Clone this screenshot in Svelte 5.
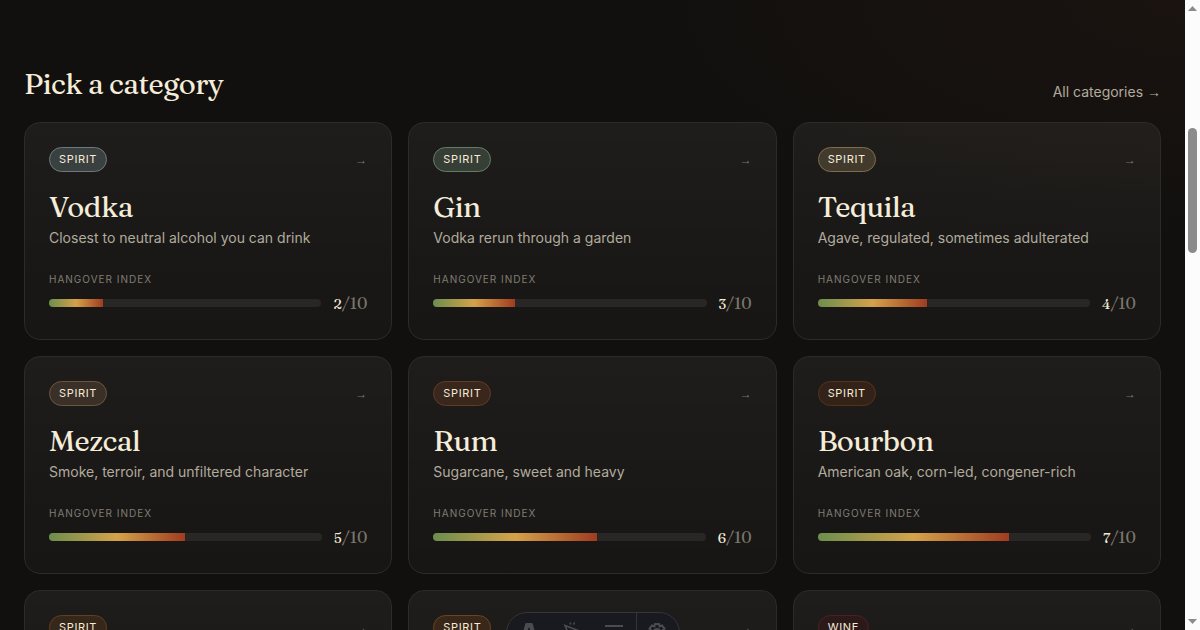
<script lang="ts">
  type Category = {
    name: string;
    kind: string;
    line: string;
    score: number;
    tint: string;
  };

  const categories: Category[] = [
    { name: "Vodka", kind: "Spirit", line: "Closest to neutral alcohol you can drink", score: 2, tint: "vodka" },
    { name: "Gin", kind: "Spirit", line: "Vodka rerun through a garden", score: 3, tint: "gin" },
    { name: "Tequila", kind: "Spirit", line: "Agave, regulated, sometimes adulterated", score: 4, tint: "tequila" },
    { name: "Mezcal", kind: "Spirit", line: "Smoke, terroir, and unfiltered character", score: 5, tint: "mezcal" },
    { name: "Rum", kind: "Spirit", line: "Sugarcane, sweet and heavy", score: 6, tint: "rum" },
    { name: "Bourbon", kind: "Spirit", line: "American oak, corn-led, congener-rich", score: 7, tint: "bourbon" },
    { name: "Whisky", kind: "Spirit", line: "Malt, cask and patience", score: 7, tint: "whisky" },
    { name: "Brandy", kind: "Spirit", line: "Grapes, distilled and rested", score: 8, tint: "brandy" },
    { name: "Red wine", kind: "Wine", line: "Tannin, skins and histamine", score: 8, tint: "wine" },
  ];
</script>

<div class="window">
  <main>
    <header>
      <h2>Pick a category</h2>
      <a class="all" href="#categories">All categories <span class="glyph">→</span></a>
    </header>

    <div class="grid" id="categories">
      {#each categories as c}
        <a class="card" href="#{c.tint}">
          <div class="top">
            <span class="badge {c.tint}">{c.kind}</span>
            <span class="arrow glyph">→</span>
          </div>
          <h3>{c.name}</h3>
          <p class="line">{c.line}</p>
          <p class="label">Hangover index</p>
          <div class="index">
            <div class="track">
              <div class="fill" style="width: {c.score * 10}%"></div>
            </div>
            <span class="score"><b>{c.score}</b>/10</span>
          </div>
        </a>
      {/each}
    </div>
  </main>

  <!-- page scrollbar -->
  <div class="scrollbar" aria-hidden="true">
    <svg width="9" height="5" viewBox="0 0 9 5"><path d="M0 5 4.5 0 9 5Z" /></svg>
    <div class="rail"><div class="thumb"></div></div>
    <svg width="9" height="5" viewBox="0 0 9 5"><path d="M0 0h9L4.5 5Z" /></svg>
  </div>

  <!-- dev toolbar, peeking over the bottom edge -->
  <div class="toolbar">
    <button aria-label="Menu">
      <svg width="20" height="20" viewBox="0 0 20 20">
        <path fill="currentColor" d="M7.500 1h5q1 0 1.300 1L17.500 16q-2-1-4.500-1.400L10.600 6q-.6-1.200-1.200 0L7 14.600Q4.500 15 2.500 16L6.200 2Q6.500 1 7.500 1Z" />
      </svg>
    </button>
    <button aria-label="Inspect">
      <svg width="20" height="20" viewBox="0 0 20 20" fill="none" stroke="currentColor" stroke-width="1.600">
        <path d="M8 .5l.8 2M12.500.5l-1 2M3 3.500l14.500 5.500-6 2-3 5.500Z" />
      </svg>
    </button>
    <button aria-label="Audit">
      <svg width="20" height="20" viewBox="0 0 20 20" fill="none" stroke="currentColor" stroke-width="2">
        <path d="M0 4h18M4 10h12M0 16h18" />
      </svg>
    </button>
    <button class="settings" aria-label="Settings">
      <svg width="20" height="20" viewBox="0 0 20 20" fill="none" stroke="currentColor" stroke-width="2">
        <path d="M7 2h4l.6 2.400 2.400-1 2.500 3.200-1.700 1.700L17 10l-2.200 1.700 1.700 2-2.500 3-2.400-1L11 18H7l-.6-2.300-2.400 1-2.500-3 1.700-2L1 10l2.200-1.700-1.700-1.700L4 3.400l2.400 1Z" />
        <circle cx="9" cy="10" r="3" />
      </svg>
    </button>
  </div>
</div>

<style>
  :global(body) {
    background: #11100e;
  }

  .window {
    position: relative;
    display: flex;
    height: 100vh;
    overflow: hidden;
    font-family: Inter, "Liberation Sans", sans-serif;
    color: #f5ecd9;
    background: radial-gradient(
      ellipse 600px 250px at 100% 0,
      #1a1310 0%,
      #11100e 100%
    );
  }

  main {
    flex: 1;
    min-width: 0;
    padding: 66px 24px 64px;
  }

  header {
    display: flex;
    align-items: flex-end;
    justify-content: space-between;
    margin-bottom: 20px;
  }

  h2,
  h3 {
    margin: 0;
    font-family: Fraunces, "Liberation Serif", serif;
    font-size: 29px;
    font-weight: 400;
    line-height: 36px;
    letter-spacing: -0.02em;
  }

  h3 {
    line-height: 38px;
  }

  a {
    color: inherit;
    text-decoration: none;
  }

  .all {
    font-size: 14px;
    line-height: 20px;
    color: #b2ab9d;
  }

  .glyph {
    font-family: "Liberation Sans", sans-serif;
  }

  /* --- CARDS --- */
  .grid {
    display: grid;
    grid-template-columns: repeat(3, 1fr);
    gap: 16px;
  }

  .card {
    padding: 24px;
    border: 1px solid #2c2b29;
    border-radius: 16px;
    background: linear-gradient(
      to bottom,
      rgba(255, 255, 255, 0.056),
      rgba(255, 255, 255, 0.024)
    );
  }

  .top {
    display: flex;
    align-items: center;
    justify-content: space-between;
    margin-bottom: 16px;
  }

  .badge {
    padding: 0 9px;
    border: 1px solid;
    border-radius: 13px;
    font-size: 11px;
    line-height: 23px;
    letter-spacing: 0.06em;
    text-transform: uppercase;
  }

  .vodka {
    background: #3a3f3f;
    border-color: #6b7b7c;
  }

  .gin {
    background: #373e35;
    border-color: #627e62;
  }

  .tequila {
    background: #423b2d;
    border-color: #7d6d49;
  }

  .mezcal {
    background: #3a3028;
    border-color: #6c553f;
  }

  .rum {
    background: #39261c;
    border-color: #633a25;
  }

  .bourbon {
    background: #322218;
    border-color: #5b301b;
  }

  .whisky {
    background: #35271a;
    border-color: #633f1e;
  }

  .brandy {
    background: #39281a;
    border-color: #6d421e;
  }

  .wine {
    background: #2c1a1a;
    border-color: #4e1f23;
  }

  .arrow {
    font-size: 12px;
    line-height: 20px;
    color: #7a756c;
  }

  p {
    margin: 0;
  }

  .line {
    margin: 2px 0 24px;
    font-size: 14px;
    line-height: 20px;
    color: #b2ab9d;
  }

  .label {
    margin-bottom: 4px;
    font-size: 10px;
    line-height: 15px;
    letter-spacing: 1px;
    text-transform: uppercase;
    color: #827c73;
  }

  .index {
    display: flex;
    align-items: center;
    gap: 12px;
  }

  .track {
    flex: 1;
    height: 8px;
    border-radius: 4px;
    overflow: hidden;
    background: #282725;
  }

  .fill {
    height: 100%;
    background: linear-gradient(to right, #6b8e4e, #d4a24a 50%, #a03c20);
  }

  .score {
    font-family: Fraunces, "Liberation Serif", serif;
    font-size: 16px;
    line-height: 24px;
    color: #7a756c;
  }

  .score b {
    font-size: 14px;
    font-weight: 500;
    line-height: 1;
    color: #f5ecd9;
  }

  /* --- SCROLLBAR --- */
  .scrollbar {
    display: flex;
    flex-direction: column;
    align-items: center;
    gap: 6px;
    width: 15px;
    padding: 6px 0;
    box-sizing: border-box;
    background: #fcfcfc;
    fill: #8b8b8b;
  }

  .rail {
    flex: 1;
    padding-top: 111px;
  }

  .thumb {
    width: 9px;
    height: 125px;
    border-radius: 5px;
    background: #8b8b8b;
  }

  /* --- TOOLBAR --- */
  .toolbar {
    position: absolute;
    bottom: -24px;
    left: calc(50% - 7px);
    transform: translateX(-50%);
    display: flex;
    height: 40px;
    border: 1px solid #343539;
    border-radius: 21px;
    overflow: hidden;
    background: #191a1f;
  }

  button {
    display: flex;
    justify-content: center;
    width: 43px;
    padding: 9px 0;
    border: 0;
    background: none;
    color: #4b4c50;
  }

  .settings {
    border-left: 1px solid #343539;
  }
</style>
